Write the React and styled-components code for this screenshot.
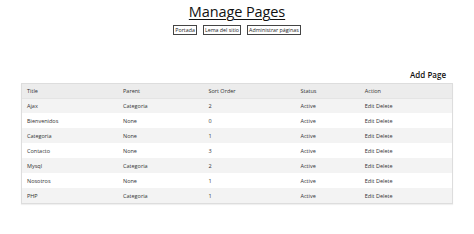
import React from "react";
import styled, { createGlobalStyle } from "styled-components";

const Global = createGlobalStyle`
  html, body { margin: 0; padding: 0; background: #fff; }
  body { font-family: "Open Sans", "DejaVu Sans", sans-serif; color: #222; }
`;

const Page = styled.div`
  width: 474px;
  height: 234px;
  display: flex;
  flex-direction: column;
  align-items: center;
  padding-top: 1px;
  box-sizing: border-box;
`;

const Title = styled.h1`
  margin: 0;
  font-family: "Open Sans", sans-serif;
  font-weight: 500;
  font-size: 14.5px;
  line-height: 21px;
  letter-spacing: -0.1px;
  text-decoration: underline;
  text-decoration-thickness: 1px;
  text-underline-offset: 2px;
  color: #111;
`;

const Nav = styled.div`
  display: flex;
  gap: 6px;
  margin-top: 3px;
`;

const NavButton = styled.button`
  font-family: "Open Sans", sans-serif;
  font-size: 5.3px;
  line-height: 8px;
  padding: 0 1px;
  border: 1px solid #444;
  background: #fff;
  color: #222;
  border-radius: 0;
`;

const AddRow = styled.div`
  align-self: stretch;
  display: flex;
  justify-content: flex-end;
  padding: 0 28px 0 0;
  margin-top: 34px;
`;

const AddLink = styled.span`
  font-size: 8px;
  font-weight: 600;
  line-height: 12px;
  color: #111;
`;

const TableWrap = styled.div`
  align-self: stretch;
  margin: 2px 21px 0 21px;
  border: 1px solid #ddd;
  box-shadow: 0 1px 1px rgba(0,0,0,0.06);
`;

const Table = styled.table`
  width: 100%;
  border-collapse: collapse;
  font-size: 5.5px;
  color: #333;
`;

const Row = styled.tr`
  height: 15px;
  background: ${(p) => (p.$shade ? "#f3f3f3" : "#fff")};
`;

const Head = styled.tr`
  height: 14px;
  background: #ececec;
`;

const Th = styled.th`
  text-align: left;
  font-weight: 400;
  padding: 0 0 0 5px;
  width: ${(p) => p.$w}px;
  border-bottom: 1px solid #e4e4e4;
`;

const Td = styled.td`
  padding: 0 0 0 5px;
`;

const cols = [
  ["Title", 96],
  ["Parent", 85],
  ["Sort Order", 93],
  ["Status", 63],
  ["Action", 93],
];

const rows = [
  ["Ajax", "Categoria", "2"],
  ["Bienvenidos", "None", "0"],
  ["Categoria", "None", "1"],
  ["Contacto", "None", "3"],
  ["Mysql", "Categoria", "2"],
  ["Nosotros", "None", "1"],
  ["PHP", "Categoria", "1"],
];

export default function App() {
  return (
    <>
      <Global />
      <Page>
        <Title>Manage Pages</Title>
        <Nav>
          <NavButton>Portada</NavButton>
          <NavButton>Lema del sitio</NavButton>
          <NavButton>Administrar páginas</NavButton>
        </Nav>
        <AddRow>
          <AddLink>Add Page</AddLink>
        </AddRow>
        <TableWrap>
          <Table>
            <thead>
              <Head>
                {cols.map(([c, w]) => (
                  <Th key={c} $w={w}>{c}</Th>
                ))}
              </Head>
            </thead>
            <tbody>
              {rows.map((r, i) => (
                <Row key={r[0]} $shade={i % 2 === 0}>
                  <Td>{r[0]}</Td>
                  <Td>{r[1]}</Td>
                  <Td>{r[2]}</Td>
                  <Td>Active</Td>
                  <Td>Edit Delete</Td>
                </Row>
              ))}
            </tbody>
          </Table>
        </TableWrap>
      </Page>
    </>
  );
}
